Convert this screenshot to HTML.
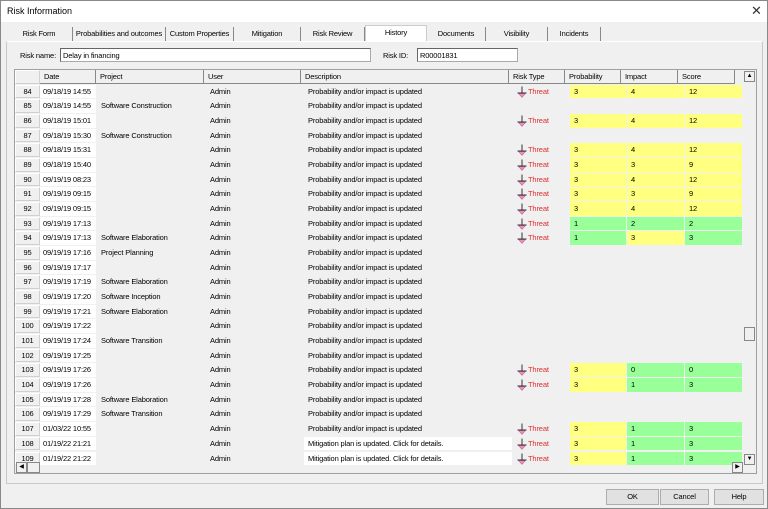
<!DOCTYPE html>
<html><head><style>
*{box-sizing:border-box;margin:0;padding:0}
body{width:768px;height:509px;background:#f0f0f0;font-family:"Liberation Sans",sans-serif;font-size:7.5px;letter-spacing:-0.15px;color:#000;position:relative;overflow:hidden}
.win{position:absolute;left:0;top:0;width:768px;height:509px;border:1px solid #888;background:#f0f0f0}
.title{position:absolute;left:0;top:0;width:766px;height:21px;background:#fff}
.title span{position:absolute;left:6px;top:5px;font-size:9px;letter-spacing:0}
.title .x{left:750px;top:2px;font-size:13px;color:#333}
.tab{position:absolute;top:26px;height:14px;text-align:center;line-height:13px;border-right:1px solid #888;white-space:nowrap}
.tab.sel{background:#fff;top:24px;height:17px;border:1px solid #ccc;border-bottom:none}
.panel{position:absolute;left:5px;top:40px;width:757px;height:443px;background:#f0f0f0;border:1px solid #c8c8c8;border-top:1px solid #fff}
.lbl{position:absolute}
.inp{position:absolute;height:14px;background:#fff;border:1px solid #aaa;border-left-color:#666;border-top-color:#666;padding:2px 2px}
.grid{position:absolute;left:13px;top:68px;width:743px;height:405px;background:#f0f0f0;border:1px solid #a0a0a0}
.row{position:absolute;left:0;display:flex;height:14.68px}
.row div{height:13.68px;margin-right:1px;margin-bottom:1px;padding-left:4px;line-height:13.68px;white-space:nowrap;overflow:hidden;background:#f0f0f0}
.row div:first-child{text-align:center;padding:0;border:1px solid #d0d0d0;border-top-color:#fff;border-left-color:#fff;margin-right:0;line-height:11.68px;background:#f0f0f0}
.hd div{background:#f0f0f0;border-right:1px solid #888;border-bottom:1px solid #888;margin:0;height:14px;line-height:13px}
.row div.d{background:#fff;padding-left:3px}
.row div.w{background:#fff}
.y{background:#ffff80!important}
.g{background:#99ff99!important}
.t{color:#e03030;position:relative;padding-left:15px!important}
.t svg{position:absolute;left:4px;top:1px}
.c0{width:25px}.c1{width:56px}.c2{width:108px}.c3{width:97px}.c4{width:208px}.c5{width:56px}.c6{width:56px}.c7{width:57px}.c8{width:57px}
.sb{position:absolute;left:728px;top:0;width:13px;height:392px;background:#f0f0f0}
.btn{position:absolute;top:488px;height:16px;background:#e1e1e1;border:1px solid #adadad;text-align:center;line-height:14px}
.ab{position:absolute;width:11px;height:11px;background:#f0f0f0;border:1px solid #888;font-size:6px;text-align:center;line-height:9px}
</style></head><body><svg width="0" height="0" style="position:absolute"><defs><symbol id="th" viewBox="0 0 10 12"><path d="M1.5 7.5 L8.5 7.5 L5 11.5 Z" fill="#f08cc0" stroke="#a04070" stroke-width="0.5"/><path d="M5 0.5 V7.5 M0.5 7 H9.5" stroke="#333" stroke-width="1" fill="none"/></symbol></defs></svg><div class="win">
<div class="title"><span>Risk Information</span><span class="x">✕</span></div>
<div class="tab" style="left:5px;width:67px;border-left:none">Risk Form</div>
<div class="tab" style="left:72px;width:93px">Probabilities and outcomes</div>
<div class="tab" style="left:165px;width:68px">Custom Properties</div>
<div class="tab" style="left:233px;width:67px">Mitigation</div>
<div class="tab" style="left:300px;width:64px">Risk Review</div>
<div class="tab sel" style="left:364px;width:62px">History</div>
<div class="tab" style="left:426px;width:59px">Documents</div>
<div class="tab" style="left:485px;width:62px">Visibility</div>
<div class="tab" style="left:547px;width:53px">Incidents</div>
<div class="panel"></div>
<div class="lbl" style="left:19px;top:50px">Risk name:</div>
<div class="inp" style="left:59px;top:47px;width:311px">Delay in financing</div>
<div class="lbl" style="left:382px;top:50px">Risk ID:</div>
<div class="inp" style="left:416px;top:47px;width:101px">R00001831</div>
<div class="grid">
<div class="row hd" style="top:0"><div class="c0"></div><div class="c1">Date</div><div class="c2">Project</div><div class="c3">User</div><div class="c4">Description</div><div class="c5">Risk Type</div><div class="c6">Probability</div><div class="c7">Impact</div><div class="c8">Score</div></div>
<div class="row" style="top:14.5px"><div class="c0">84</div><div class="c1 d">09/18/19 14:55</div><div class="c2"></div><div class="c3">Admin</div><div class="c4">Probability and/or impact is updated</div><div class="c5 t"><svg width="10" height="12"><use href="#th"/></svg>Threat</div><div class="c6 y">3</div><div class="c7 y">4</div><div class="c8 y">12</div></div>
<div class="row" style="top:29.18px"><div class="c0">85</div><div class="c1 d">09/18/19 14:55</div><div class="c2">Software Construction</div><div class="c3">Admin</div><div class="c4">Probability and/or impact is updated</div><div class="c5"></div><div class="c6"></div><div class="c7"></div><div class="c8"></div></div>
<div class="row" style="top:43.86px"><div class="c0">86</div><div class="c1 d">09/18/19 15:01</div><div class="c2"></div><div class="c3">Admin</div><div class="c4">Probability and/or impact is updated</div><div class="c5 t"><svg width="10" height="12"><use href="#th"/></svg>Threat</div><div class="c6 y">3</div><div class="c7 y">4</div><div class="c8 y">12</div></div>
<div class="row" style="top:58.54px"><div class="c0">87</div><div class="c1 d">09/18/19 15:30</div><div class="c2">Software Construction</div><div class="c3">Admin</div><div class="c4">Probability and/or impact is updated</div><div class="c5"></div><div class="c6"></div><div class="c7"></div><div class="c8"></div></div>
<div class="row" style="top:73.22px"><div class="c0">88</div><div class="c1 d">09/18/19 15:31</div><div class="c2"></div><div class="c3">Admin</div><div class="c4">Probability and/or impact is updated</div><div class="c5 t"><svg width="10" height="12"><use href="#th"/></svg>Threat</div><div class="c6 y">3</div><div class="c7 y">4</div><div class="c8 y">12</div></div>
<div class="row" style="top:87.9px"><div class="c0">89</div><div class="c1 d">09/18/19 15:40</div><div class="c2"></div><div class="c3">Admin</div><div class="c4">Probability and/or impact is updated</div><div class="c5 t"><svg width="10" height="12"><use href="#th"/></svg>Threat</div><div class="c6 y">3</div><div class="c7 y">3</div><div class="c8 y">9</div></div>
<div class="row" style="top:102.58px"><div class="c0">90</div><div class="c1 d">09/19/19 08:23</div><div class="c2"></div><div class="c3">Admin</div><div class="c4">Probability and/or impact is updated</div><div class="c5 t"><svg width="10" height="12"><use href="#th"/></svg>Threat</div><div class="c6 y">3</div><div class="c7 y">4</div><div class="c8 y">12</div></div>
<div class="row" style="top:117.26px"><div class="c0">91</div><div class="c1 d">09/19/19 09:15</div><div class="c2"></div><div class="c3">Admin</div><div class="c4">Probability and/or impact is updated</div><div class="c5 t"><svg width="10" height="12"><use href="#th"/></svg>Threat</div><div class="c6 y">3</div><div class="c7 y">3</div><div class="c8 y">9</div></div>
<div class="row" style="top:131.94px"><div class="c0">92</div><div class="c1 d">09/19/19 09:15</div><div class="c2"></div><div class="c3">Admin</div><div class="c4">Probability and/or impact is updated</div><div class="c5 t"><svg width="10" height="12"><use href="#th"/></svg>Threat</div><div class="c6 y">3</div><div class="c7 y">4</div><div class="c8 y">12</div></div>
<div class="row" style="top:146.62px"><div class="c0">93</div><div class="c1 d">09/19/19 17:13</div><div class="c2"></div><div class="c3">Admin</div><div class="c4">Probability and/or impact is updated</div><div class="c5 t"><svg width="10" height="12"><use href="#th"/></svg>Threat</div><div class="c6 g">1</div><div class="c7 g">2</div><div class="c8 g">2</div></div>
<div class="row" style="top:161.3px"><div class="c0">94</div><div class="c1 d">09/19/19 17:13</div><div class="c2">Software Elaboration</div><div class="c3">Admin</div><div class="c4">Probability and/or impact is updated</div><div class="c5 t"><svg width="10" height="12"><use href="#th"/></svg>Threat</div><div class="c6 g">1</div><div class="c7 y">3</div><div class="c8 g">3</div></div>
<div class="row" style="top:175.98px"><div class="c0">95</div><div class="c1 d">09/19/19 17:16</div><div class="c2">Project Planning</div><div class="c3">Admin</div><div class="c4">Probability and/or impact is updated</div><div class="c5"></div><div class="c6"></div><div class="c7"></div><div class="c8"></div></div>
<div class="row" style="top:190.66px"><div class="c0">96</div><div class="c1 d">09/19/19 17:17</div><div class="c2"></div><div class="c3">Admin</div><div class="c4">Probability and/or impact is updated</div><div class="c5"></div><div class="c6"></div><div class="c7"></div><div class="c8"></div></div>
<div class="row" style="top:205.34px"><div class="c0">97</div><div class="c1 d">09/19/19 17:19</div><div class="c2">Software Elaboration</div><div class="c3">Admin</div><div class="c4">Probability and/or impact is updated</div><div class="c5"></div><div class="c6"></div><div class="c7"></div><div class="c8"></div></div>
<div class="row" style="top:220.02px"><div class="c0">98</div><div class="c1 d">09/19/19 17:20</div><div class="c2">Software Inception</div><div class="c3">Admin</div><div class="c4">Probability and/or impact is updated</div><div class="c5"></div><div class="c6"></div><div class="c7"></div><div class="c8"></div></div>
<div class="row" style="top:234.7px"><div class="c0">99</div><div class="c1 d">09/19/19 17:21</div><div class="c2">Software Elaboration</div><div class="c3">Admin</div><div class="c4">Probability and/or impact is updated</div><div class="c5"></div><div class="c6"></div><div class="c7"></div><div class="c8"></div></div>
<div class="row" style="top:249.38px"><div class="c0">100</div><div class="c1 d">09/19/19 17:22</div><div class="c2"></div><div class="c3">Admin</div><div class="c4">Probability and/or impact is updated</div><div class="c5"></div><div class="c6"></div><div class="c7"></div><div class="c8"></div></div>
<div class="row" style="top:264.06px"><div class="c0">101</div><div class="c1 d">09/19/19 17:24</div><div class="c2">Software Transition</div><div class="c3">Admin</div><div class="c4">Probability and/or impact is updated</div><div class="c5"></div><div class="c6"></div><div class="c7"></div><div class="c8"></div></div>
<div class="row" style="top:278.74px"><div class="c0">102</div><div class="c1 d">09/19/19 17:25</div><div class="c2"></div><div class="c3">Admin</div><div class="c4">Probability and/or impact is updated</div><div class="c5"></div><div class="c6"></div><div class="c7"></div><div class="c8"></div></div>
<div class="row" style="top:293.42px"><div class="c0">103</div><div class="c1 d">09/19/19 17:26</div><div class="c2"></div><div class="c3">Admin</div><div class="c4">Probability and/or impact is updated</div><div class="c5 t"><svg width="10" height="12"><use href="#th"/></svg>Threat</div><div class="c6 y">3</div><div class="c7 g">0</div><div class="c8 g">0</div></div>
<div class="row" style="top:308.1px"><div class="c0">104</div><div class="c1 d">09/19/19 17:26</div><div class="c2"></div><div class="c3">Admin</div><div class="c4">Probability and/or impact is updated</div><div class="c5 t"><svg width="10" height="12"><use href="#th"/></svg>Threat</div><div class="c6 y">3</div><div class="c7 g">1</div><div class="c8 g">3</div></div>
<div class="row" style="top:322.78px"><div class="c0">105</div><div class="c1 d">09/19/19 17:28</div><div class="c2">Software Elaboration</div><div class="c3">Admin</div><div class="c4">Probability and/or impact is updated</div><div class="c5"></div><div class="c6"></div><div class="c7"></div><div class="c8"></div></div>
<div class="row" style="top:337.46px"><div class="c0">106</div><div class="c1 d">09/19/19 17:29</div><div class="c2">Software Transition</div><div class="c3">Admin</div><div class="c4">Probability and/or impact is updated</div><div class="c5"></div><div class="c6"></div><div class="c7"></div><div class="c8"></div></div>
<div class="row" style="top:352.14px"><div class="c0">107</div><div class="c1 d">01/03/22 10:55</div><div class="c2"></div><div class="c3">Admin</div><div class="c4">Probability and/or impact is updated</div><div class="c5 t"><svg width="10" height="12"><use href="#th"/></svg>Threat</div><div class="c6 y">3</div><div class="c7 g">1</div><div class="c8 g">3</div></div>
<div class="row" style="top:366.82px"><div class="c0">108</div><div class="c1 d">01/19/22 21:21</div><div class="c2"></div><div class="c3">Admin</div><div class="c4 w">Mitigation plan is updated. Click for details.</div><div class="c5 t"><svg width="10" height="12"><use href="#th"/></svg>Threat</div><div class="c6 y">3</div><div class="c7 g">1</div><div class="c8 g">3</div></div>
<div class="row" style="top:381.5px"><div class="c0">109</div><div class="c1 d">01/19/22 21:22</div><div class="c2"></div><div class="c3">Admin</div><div class="c4 w">Mitigation plan is updated. Click for details.</div><div class="c5 t"><svg width="10" height="12"><use href="#th"/></svg>Threat</div><div class="c6 y">3</div><div class="c7 g">1</div><div class="c8 g">3</div></div>
<div class="sb"></div>
<div class="ab" style="left:729px;top:1px">▲</div>
<div class="ab" style="left:729px;top:257px;height:14px"></div>
<div class="ab" style="left:729px;top:384px">▼</div>
<div class="ab" style="left:1px;top:392px">◀</div>
<div class="ab" style="left:12px;top:392px;width:13px"></div>
<div class="ab" style="left:717px;top:392px">▶</div>
</div>
<div class="btn" style="left:605px;width:53px">OK</div>
<div class="btn" style="left:659px;width:49px">Cancel</div>
<div class="btn" style="left:713px;width:50px">Help</div>
</div></body></html>
